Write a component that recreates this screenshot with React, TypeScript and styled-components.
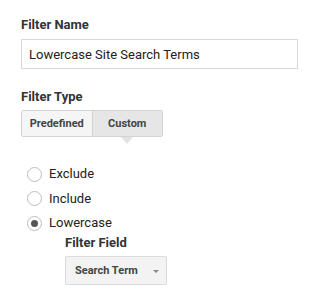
import React from "react"
import styled, { createGlobalStyle } from "styled-components"

const GlobalStyle = createGlobalStyle`
  html, body {
    margin: 0;
    padding: 0;
    background: #fff;
  }
  body {
    font-family: Roboto, "Liberation Sans", Arial, sans-serif;
    color: #222;
  }
`

const Panel = styled.div`
  display: flex;
  flex-direction: column;
  padding: 17px 0 0 21px;
  width: 277px;
`

const Label = styled.div`
  font-size: 13px;
  font-weight: 700;
  color: #333;
  line-height: 16px;
`

const Field = styled.div<{ $gap?: number }>`
  display: flex;
  flex-direction: column;
  gap: ${(p) => p.$gap ?? 6}px;
`

const TextInput = styled.input`
  box-sizing: border-box;
  width: 277px;
  height: 30px;
  margin-bottom: 20px;
  border: 1px solid #d9d9d9;
  padding: 0 7px;
  font-family: inherit;
  font-size: 13px;
  color: #222;
  outline: none;
`

const Segmented = styled.div`
  display: flex;
  width: 142px;
  box-sizing: border-box;
  border: 1px solid #d4d4d4;
  border-radius: 2px;
`

const Segment = styled.div<{ $active?: boolean }>`
  position: relative;
  display: flex;
  align-items: center;
  justify-content: center;
  height: 25px;
  flex: 1;
  font-size: 11px;
  font-weight: 700;
  color: #444;
  background: ${(p) => (p.$active ? "#e6e6e6" : "#f5f5f5")};
  border-left: ${(p) => (p.$active ? "1px solid #d4d4d4" : "none")};

  ${(p) =>
    p.$active &&
    `
    &::after {
      content: "";
      position: absolute;
      left: 50%;
      bottom: -8px;
      margin-left: -6px;
      border-left: 6px solid transparent;
      border-right: 6px solid transparent;
      border-top: 7px solid #e2e2e2;
    }
  `}
`

const RadioList = styled.div`
  display: flex;
  flex-direction: column;
  gap: 8.5px;
  padding: 29px 0 0 6px;
`

const RadioRow = styled.label`
  display: flex;
  align-items: center;
  gap: 7px;
  font-size: 13px;
  color: #222;
  line-height: 16px;
`

const Circle = styled.span<{ $checked?: boolean }>`
  box-sizing: border-box;
  width: 15px;
  height: 15px;
  border-radius: 50%;
  border: 1px solid #bdbdbd;
  display: flex;
  align-items: center;
  justify-content: center;

  &::after {
    content: "";
    width: 7px;
    height: 7px;
    border-radius: 50%;
    background: ${(p) => (p.$checked ? "#555" : "transparent")};
  }
`

const SubField = styled.div`
  display: flex;
  flex-direction: column;
  gap: 5px;
  padding: 3.5px 0 0 44px;
`

const Dropdown = styled.div`
  box-sizing: border-box;
  display: flex;
  align-items: center;
  gap: 15px;
  width: 102px;
  height: 29px;
  padding: 0 0 0 9px;
  background: #f3f3f3;
  border: 1px solid #dcdcdc;
  border-radius: 2px;
  font-size: 11px;
  font-weight: 700;
  color: #444;
`

const Caret = styled.span`
  width: 0;
  height: 0;
  border-left: 3px solid transparent;
  border-right: 3px solid transparent;
  border-top: 3px solid #888;
  margin-top: 2px;
`

const options = [
  { label: "Exclude", checked: false },
  { label: "Include", checked: false },
  { label: "Lowercase", checked: true },
]

export default function App() {
  return (
    <>
      <GlobalStyle />
      <Panel>
        <Field>
          <Label>Filter Name</Label>
          <TextInput defaultValue="Lowercase Site Search Terms" />
        </Field>
        <Field $gap={5}>
          <Label>Filter Type</Label>
          <Segmented>
            <Segment>Predefined</Segment>
            <Segment $active>Custom</Segment>
          </Segmented>
        </Field>
        <RadioList>
          {options.map((o) => (
            <RadioRow key={o.label}>
              <Circle $checked={o.checked} />
              {o.label}
            </RadioRow>
          ))}
        </RadioList>
        <SubField>
          <Label>Filter Field</Label>
          <Dropdown>
            Search Term
            <Caret />
          </Dropdown>
        </SubField>
      </Panel>
    </>
  )
}
